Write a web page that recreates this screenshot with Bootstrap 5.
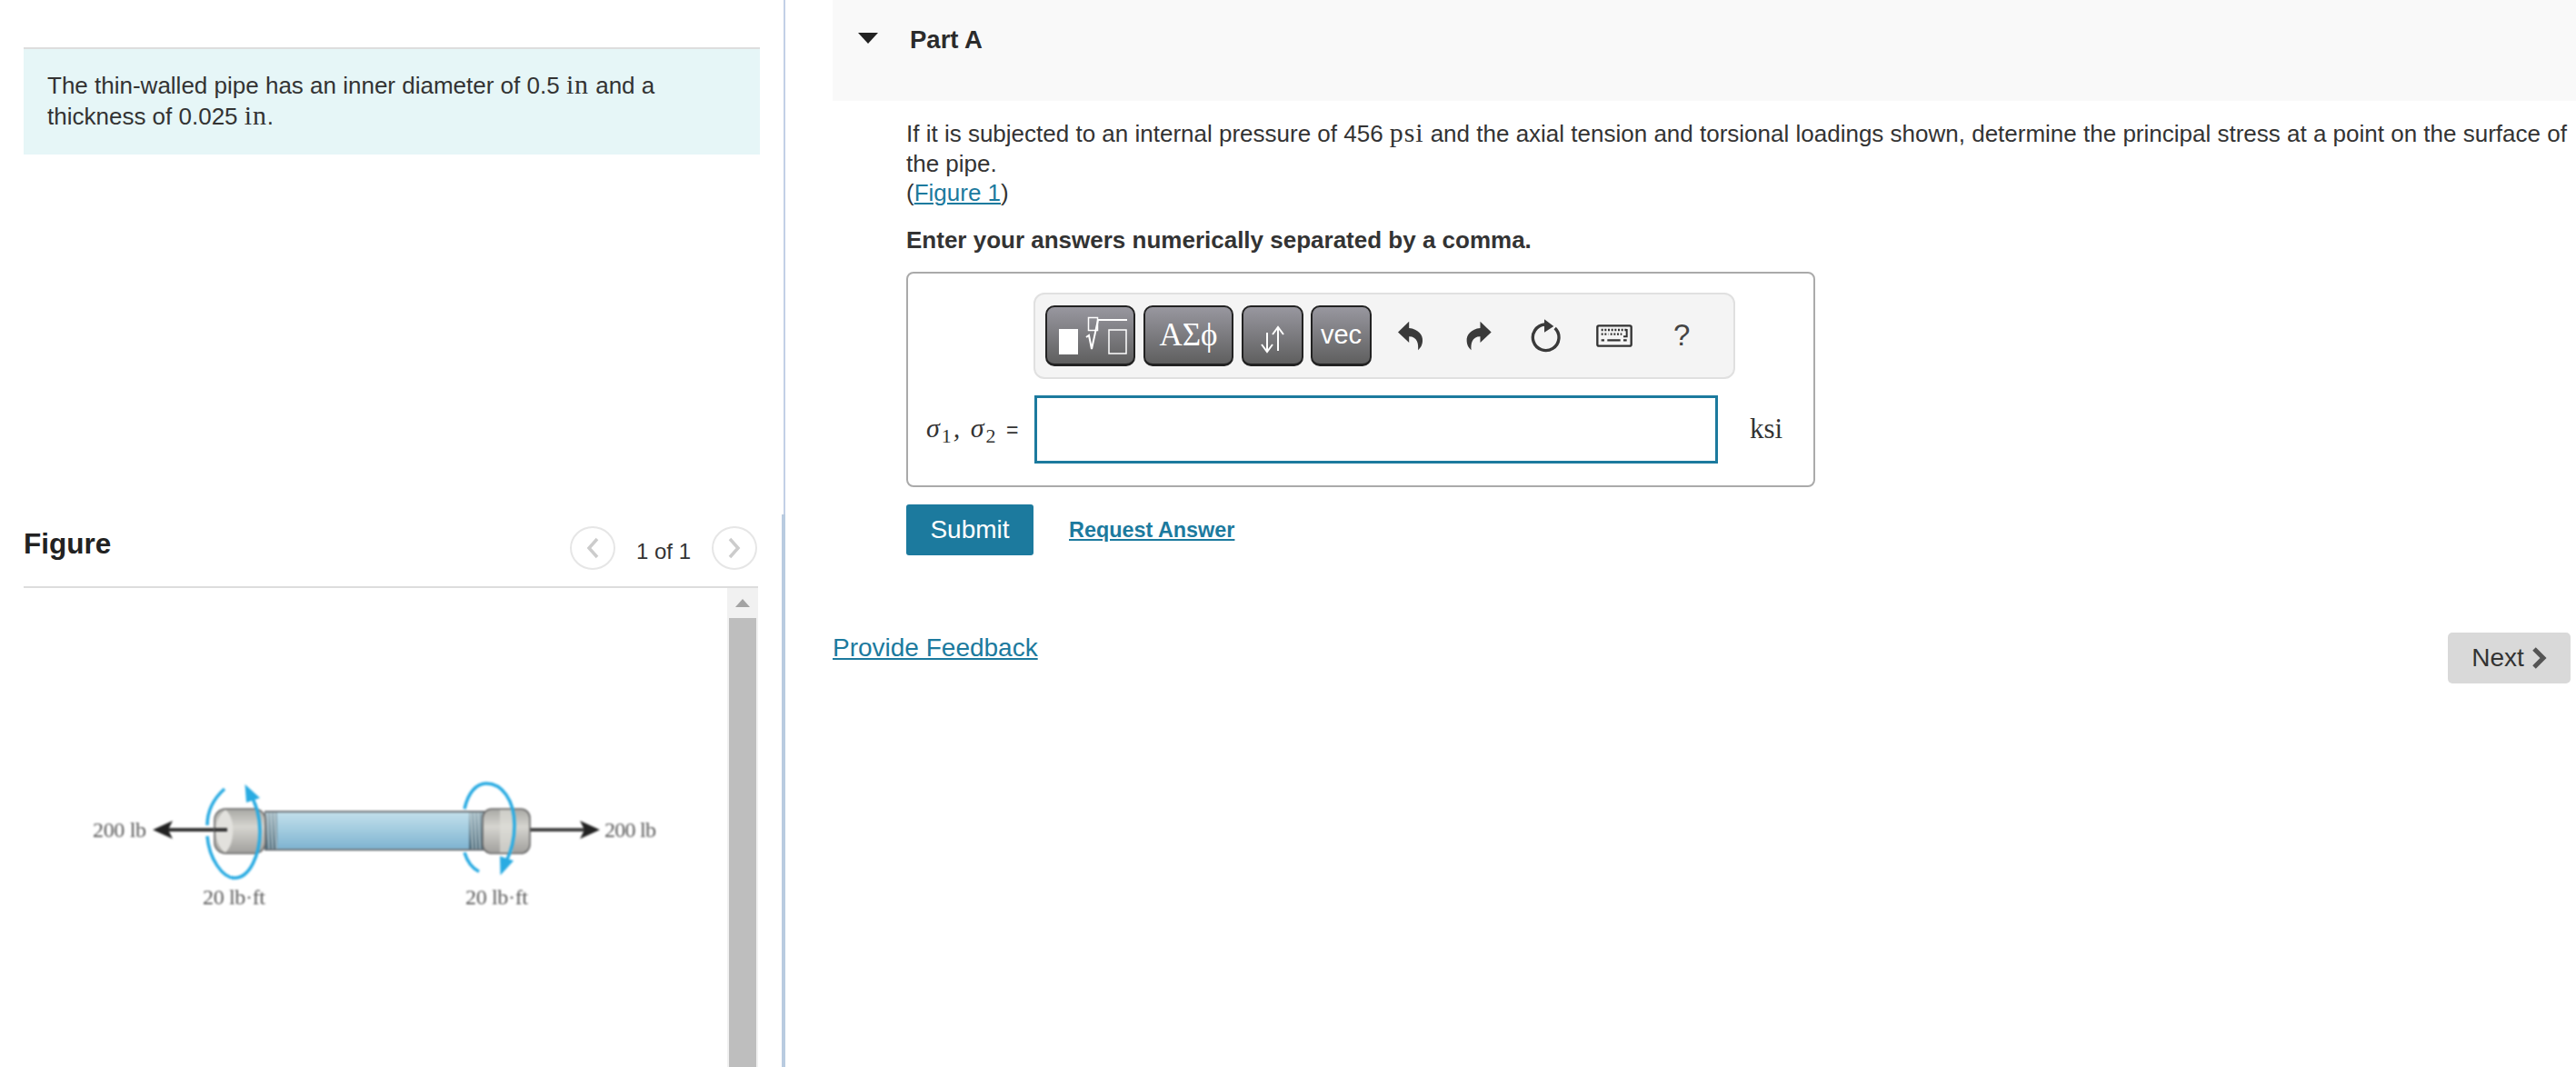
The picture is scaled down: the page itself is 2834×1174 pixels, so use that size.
<!DOCTYPE html>
<html lang="en">

<head>
    <meta charset="UTF-8">
    <title>Part A</title>
    <meta name="viewport" content="width=device-width, initial-scale=1">
    <link href="https://cdn.jsdelivr.net/npm/bootstrap@5.3.0/dist/css/bootstrap.min.css" rel="stylesheet">
    <style>
        html,
        body {
            height: 100%;
            overflow: hidden;
        }

        body {
            font-family: "Liberation Sans", Arial, sans-serif;
            font-size: 26px;
            line-height: 32.5px;
            color: #333;
            background: #fff;
        }

        a {
            color: #1c7a9e;
        }

        .math {
            font-family: "Liberation Serif", serif;
            font-size: 1.15em;
            line-height: 1;
            letter-spacing: .03em;
        }

        /* left column */
        .left-pane {
            width: 860px;
            padding-left: 26px;
        }

        .intro-box {
            width: 810px;
            margin-top: 52px;
            padding: 23px 26px 25px;
            line-height: 34px;
            background: #e6f6f7;
            border-top: 2px solid #ddd;
        }

        .figure-head {
            width: 808px;
            margin-top: 409px;
            padding: 0 1px 18px 0;
            border-bottom: 2px solid #ddd;
        }

        .figure-title {
            font-size: 31.5px;
            line-height: 38px;
            font-weight: 700;
            color: #222;
        }

        .pager-text {
            font-size: 24px;
            margin: 12px 23px 0;
        }

        .pager-btn {
            width: 50px;
            height: 48px;
            padding: 0;
            border: 2px solid #e6e6e6;
            background: #fff;
        }

        .figure-body {
            width: 808px;
            min-height: 0;
        }

        .figure-art {
            filter: blur(.85px);
        }

        .fig-label {
            font-family: "Liberation Serif", serif;
            font-size: 24px;
            fill: #5a5a5a;
        }

        .fake-scroll {
            width: 34px;
            padding: 0 2px;
            background: #f1f1f1;
        }

        .scroll-up {
            height: 33px;
        }

        .scroll-arrow {
            width: 0;
            height: 0;
            border-left: 8px solid transparent;
            border-right: 8px solid transparent;
            border-bottom: 9px solid #a3a3a3;
        }

        .scroll-thumb {
            background: #bebebe;
        }

        .rule-col {
            width: 4px;
        }

        .rule-top {
            width: 2px;
            height: 566px;
            background: #c3d0e6;
        }

        .rule-rest {
            background: #b9cbe0;
        }

        /* right column */
        .right-pane {
            margin-left: 52px;
            min-width: 0;
        }

        .part-head {
            height: 111px;
            padding: 28px 0 0 28px;
            background: #f9f9f9;
        }

        .part-caret {
            width: 0;
            height: 0;
            margin-right: 35px;
            border-left: 11px solid transparent;
            border-right: 11px solid transparent;
            border-top: 12px solid #222;
        }

        .part-title {
            font-size: 27.5px;
            font-weight: 700;
            color: #2b2b2b;
        }

        .part-body {
            padding-left: 81px;
        }

        .question {
            margin: 20px 0 0;
        }

        .prompt {
            margin: 19px 0 0;
            font-weight: 700;
        }

        .answer-box {
            width: 1000px;
            margin-top: 19px;
            padding: 21px 0 24px;
            border: 2px solid #aaa;
            border-radius: 8px;
        }

        .tool-bar {
            width: 772px;
            height: 95px;
            margin: 0 0 18px 138px;
            padding-left: 11px;
            background: #f4f4f4;
            border: 2px solid #e0e0e0;
            border-radius: 12px;
        }

        .tool-btn {
            height: 67px;
            margin-right: 9px;
            padding: 0;
            color: #fff;
            border: 2px solid #222;
            border-bottom-width: 3px;
            border-radius: 10px;
            background: linear-gradient(#98979f, #5f5f5f);
        }

        .tool-wide {
            width: 99px;
        }

        .tool-narrow {
            width: 68px;
        }

        .tool-greek {
            font-family: "Liberation Serif", serif;
            font-size: 35px;
        }

        .tool-vec {
            width: 67px;
            margin-left: -1px;
            margin-right: 6px;
            font-size: 29px;
        }

        .tool-cell {
            width: 74.5px;
        }

        .tool-help {
            font-size: 33px;
            color: #444;
        }

        .answer-label {
            width: 139px;
            padding-left: 20px;
            font-family: "Liberation Serif", serif;
            font-size: 30px;
            font-style: italic;
            letter-spacing: 2px;
            white-space: nowrap;
        }

        .answer-label sub {
            font-style: normal;
            font-size: 22px;
        }

        .answer-eq {
            font-family: "Liberation Sans", sans-serif;
            font-style: normal;
            font-size: 23px;
        }

        .answer-input {
            width: 752px;
            height: 75px;
            border: 3px solid #1c7a9e;
            border-radius: 0;
        }

        .answer-unit {
            margin-left: 35px;
            font-family: "Liberation Serif", serif;
            font-size: 31px;
        }

        .submit-row {
            margin-top: 19px;
        }

        .submit-btn {
            width: 140px;
            height: 56px;
            padding: 0;
            font-size: 28px;
            color: #fff;
            background: #1c7a9e;
            border: 0;
            border-radius: 3px;
        }

        .request-link {
            margin-left: 39px;
            font-size: 23.4px;
            font-weight: 700;
        }

        .foot-row {
            margin-top: 85px;
            padding-right: 6px;
        }

        .feedback-link {
            margin-top: 1px;
            font-size: 28px;
        }

        .next-btn {
            width: 135px;
            height: 56px;
            padding: 0;
            font-size: 28px;
            color: #333;
            background: #d9d9d9;
            border: 0;
            border-radius: 5px;
        }
    </style>
</head>

<body>

    <div class="d-flex h-100">

        <!-- Left column: problem intro and figure -->
        <div class="left-pane d-flex flex-column h-100 flex-shrink-0">
            <div class="intro-box">
                The thin-walled pipe has an inner diameter of 0.5 <span class="math">in</span> and a<br>
                thickness of 0.025 <span class="math">in</span>.
            </div>

            <div class="figure-head d-flex align-items-start">
                <div class="figure-title me-auto">Figure</div>
                <button class="btn pager-btn rounded-circle d-flex align-items-center justify-content-center" type="button" aria-label="Previous">
                    <svg width="14" height="24" viewBox="0 0 14 24"><polyline points="12,2 3,12 12,22" fill="none" stroke="#ccc" stroke-width="3.5"/></svg>
                </button>
                <span class="pager-text">1 of 1</span>
                <button class="btn pager-btn rounded-circle d-flex align-items-center justify-content-center" type="button" aria-label="Next">
                    <svg width="14" height="24" viewBox="0 0 14 24"><polyline points="2,2 11,12 2,22" fill="none" stroke="#ccc" stroke-width="3.5"/></svg>
                </button>
            </div>

            <div class="figure-body d-flex flex-grow-1">
                <div class="flex-grow-1">
                    <svg class="figure-art d-block" width="774" height="527" viewBox="26 647 774 527">
                        <defs>
                            <linearGradient id="tubeFill" x1="0" y1="0" x2="0" y2="1">
                                <stop offset="0" stop-color="#c4e0ec"/>
                                <stop offset=".45" stop-color="#a4cde0"/>
                                <stop offset="1" stop-color="#7db2d0"/>
                            </linearGradient>
                            <linearGradient id="capFill" x1="0" y1="0" x2="0" y2="1">
                                <stop offset="0" stop-color="#a8a8a4"/>
                                <stop offset=".4" stop-color="#d6d5d0"/>
                                <stop offset="1" stop-color="#a09f9c"/>
                            </linearGradient>
                            <linearGradient id="threadFill" x1="0" y1="0" x2="0" y2="1">
                                <stop offset="0" stop-color="#9db4be"/>
                                <stop offset="1" stop-color="#4a6878"/>
                            </linearGradient>
                        </defs>

                        <text class="fig-label" x="102" y="921" textLength="59">200 lb</text>
                        <text class="fig-label" x="665" y="921" textLength="57">200 lb</text>
                        <text class="fig-label" x="223" y="995" textLength="69">20 lb·ft</text>
                        <text class="fig-label" x="512" y="995" textLength="69">20 lb·ft</text>

                        <!-- axial arrows -->
                        <line x1="185" y1="913" x2="250" y2="913" stroke="#333" stroke-width="4"/>
                        <polygon points="168,913 190,903 185,913 190,923" fill="#222"/>
                        <line x1="583" y1="913" x2="645" y2="913" stroke="#444" stroke-width="4"/>
                        <polygon points="660,913 638,903 643,913 638,923" fill="#222"/>

                        <!-- tube -->
                        <rect x="292" y="893" width="240" height="42" fill="url(#tubeFill)" stroke="#6d7378" stroke-width="2"/>
                        <rect x="292" y="894" width="13" height="40" fill="url(#threadFill)"/>
                        <rect x="516" y="894" width="16" height="40" fill="url(#threadFill)"/>
                        <path d="M294 894l2 40M298 894l2 40M302 894l2 40M518 894l2 40M522 894l2 40M526 894l2 40" stroke="#cfdde2" stroke-width="1.2"/>

                        <!-- end caps -->
                        <rect x="236" y="890" width="56" height="49" rx="12" fill="url(#capFill)" stroke="#666" stroke-width="1.6"/>
                        <path d="M248 891 C234 900 234 930 248 938 C258 930 260 900 248 891Z" fill="#e2e1dd"/>
                        <rect x="531" y="890" width="52" height="49" rx="10" fill="url(#capFill)" stroke="#666" stroke-width="1.6"/>
                        <rect x="550" y="891" width="14" height="47" fill="#dfded9" opacity=".65"/>
                        <line x1="236" y1="913" x2="250" y2="913" stroke="#333" stroke-width="4"/>

                        <!-- torque arrows -->
                        <g fill="none" stroke="#29abe2" stroke-width="3.5">
                            <path d="M247 868 Q228 885 228 908"/>
                            <path d="M228 920 C230 945 245 966 258 966 C275 966 286 940 286 915 C286 897 281 882 273 870"/>
                            <path d="M511 890 C515 872 524 862 535 862 C552 862 566 880 566 908 C566 925 562 938 556 950"/>
                            <path d="M511 938 C514 948 519 955 527 959"/>
                        </g>
                        <polygon points="269.5,863 271,883 286,878" fill="#29abe2"/>
                        <polygon points="550.5,963 550,942 565,947" fill="#29abe2"/>
                    </svg>
                </div>
                <div class="fake-scroll d-flex flex-column flex-shrink-0">
                    <div class="scroll-up d-flex justify-content-center align-items-center">
                        <div class="scroll-arrow"></div>
                    </div>
                    <div class="scroll-thumb flex-grow-1"></div>
                </div>
            </div>
        </div>

        <div class="rule-col d-flex flex-column align-items-end flex-shrink-0">
            <div class="rule-top"></div>
            <div class="rule-rest flex-grow-1 w-100"></div>
        </div>

        <!-- Right column: Part A -->
        <div class="right-pane flex-grow-1">
            <div class="part-head d-flex align-items-start">
                <div class="part-caret mt-2"></div>
                <div class="part-title">Part A</div>
            </div>

            <div class="part-body">
                <p class="question">
                    If it is subjected to an internal pressure of 456 <span class="math">psi</span> and the axial tension and torsional loadings shown, determine the principal stress at a point on the surface of<br>
                    the pipe.<br>
                    (<a href="#">Figure 1</a>)
                </p>
                <p class="prompt">Enter your answers numerically separated by a comma.</p>

                <div class="answer-box">
                    <div class="tool-bar d-flex align-items-center">
                        <button class="btn tool-btn tool-wide d-block" type="button" aria-label="Templates">
                            <svg class="d-block" width="95" height="62" viewBox="2 2 95 62">
                                <rect x="15" y="26" width="21" height="28" fill="#fff"/>
                                <rect x="47.5" y="13.5" width="10" height="14" fill="none" stroke="#fff" stroke-width="1.5"/>
                                <polyline points="45,35 48,33 51,48 58,16 90,16" fill="none" stroke="#fff" stroke-width="2"/>
                                <rect x="70" y="27" width="19" height="26" fill="none" stroke="#fff" stroke-width="1.5"/>
                            </svg>
                        </button>
                        <button class="btn tool-btn tool-wide tool-greek" type="button">ΑΣϕ</button>
                        <button class="btn tool-btn tool-narrow d-block" type="button" aria-label="Arrows">
                            <svg class="d-block" width="64" height="62" viewBox="2 2 64 62">
                                <path d="M28 30V50M22 43L28 51L34 43M40 50V25M34 32L40 24L46 32" fill="none" stroke="#fff" stroke-width="2"/>
                            </svg>
                        </button>
                        <button class="btn tool-btn tool-vec" type="button">vec</button>

                        <div class="tool-cell d-flex justify-content-center">
                            <svg width="28" height="35" viewBox="113 110 85 105"><path d="M113 150L150 115V137C180 140 197 160 195 180C194 195 188 203 180 210C182 190 178 165 150 165V185Z" fill="#3a3a3a"/></svg>
                        </div>
                        <div class="tool-cell d-flex justify-content-center">
                            <svg width="28" height="35" viewBox="343 110 85 105"><path d="M427 150L390 115V137C360 140 343 160 345 180C346 195 352 203 360 210C358 190 362 165 390 165V185Z" fill="#3a3a3a"/></svg>
                        </div>
                        <div class="tool-cell d-flex justify-content-center">
                            <svg width="34" height="37" viewBox="552 106 102 111">
                                <path d="M598 124A43 43 0 1 0 632 136" fill="none" stroke="#3a3a3a" stroke-width="10"/>
                                <polygon points="597,107 628,130 597,150" fill="#3a3a3a"/>
                            </svg>
                        </div>
                        <div class="tool-cell d-flex justify-content-center">
                            <svg width="40" height="25" viewBox="765 140 120 75">
                                <rect x="769" y="144" width="112" height="67" rx="5" fill="#f4f4f4" stroke="#333" stroke-width="7"/>
                                <path d="M782 158H866" stroke="#333" stroke-width="7" stroke-dasharray="6 5" fill="none"/>
                                <path d="M782 172H805M812 172H850" stroke="#333" stroke-width="7" stroke-dasharray="6 5" fill="none"/>
                                <path d="M866 155V180H855" stroke="#333" stroke-width="6" fill="none"/>
                                <path d="M782 192H792M802 192H845M855 192H866" stroke="#333" stroke-width="7" fill="none"/>
                            </svg>
                        </div>
                        <div class="tool-cell tool-help text-center">?</div>
                    </div>

                    <div class="d-flex align-items-center">
                        <label class="answer-label" for="answer">σ<sub>1</sub>, σ<sub>2</sub> <span class="answer-eq">=</span></label>
                        <input class="form-control answer-input" id="answer" type="text">
                        <span class="answer-unit">ksi</span>
                    </div>
                </div>

                <div class="submit-row d-flex align-items-center">
                    <button class="btn submit-btn" type="button">Submit</button>
                    <a class="request-link" href="#">Request Answer</a>
                </div>
            </div>

            <div class="foot-row d-flex justify-content-between align-items-start">
                <a class="feedback-link" href="#">Provide Feedback</a>
                <button class="btn next-btn d-flex align-items-center justify-content-center gap-2" type="button">
                    Next
                    <svg width="17" height="26" viewBox="0 0 17 26"><polyline points="3,3 13,13 3,23" fill="none" stroke="#555" stroke-width="5"/></svg>
                </button>
            </div>
        </div>
    </div>

    <script src="https://cdn.jsdelivr.net/npm/bootstrap@5.3.0/dist/js/bootstrap.bundle.min.js"></script>
</body>

</html>
